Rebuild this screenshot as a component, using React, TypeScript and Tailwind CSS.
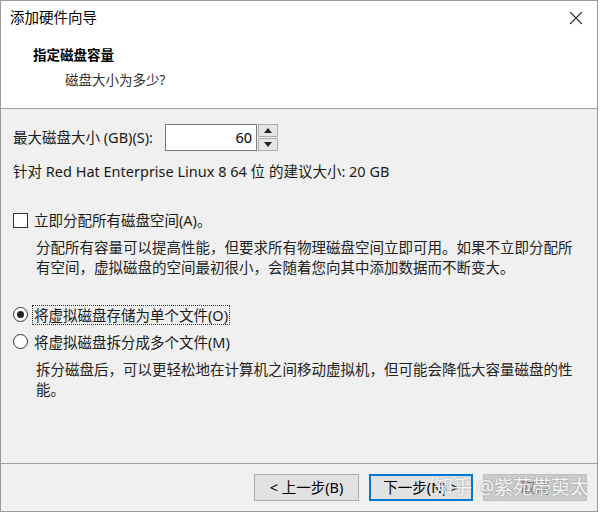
import React from "react";

const font = {
  fontFamily: '"Noto Sans", "Noto Sans CJK SC", sans-serif',
};

function Radio({ checked }: { checked?: boolean }) {
  return (
    <span className="flex h-[15px] w-[15px] items-center justify-center rounded-full border border-[#333] bg-white">
      {checked && <span className="h-[7px] w-[7px] rounded-full bg-[#222]" />}
    </span>
  );
}

export default function App() {
  return (
    <div className="h-[513px] w-[600px] bg-white text-[14.5px] text-[#1a1a1a]" style={font}>
      <div className="relative flex h-[512px] w-[598px] flex-col border border-[#9a9a9a]">
        {/* title bar + header */}
        <div className="flex h-[107px] flex-col bg-white">
          <div className="flex h-[34px] items-center justify-between pl-[9px] pr-[14px]">
            <span className="text-[14.5px] text-black">添加硬件向导</span>
            <svg width="14" height="14" viewBox="0 0 14 14" className="text-[#333]">
              <path d="M1 1L13 13M13 1L1 13" stroke="currentColor" strokeWidth="1.1" />
            </svg>
          </div>
          <div className="pl-[32px] pt-[10px]">
            <div className="text-[13.5px] font-bold text-black">指定磁盘容量</div>
            <div className="mt-[5px] pl-[32px] text-[13.5px] text-[#333]">磁盘大小为多少?</div>
          </div>
        </div>
        <div className="h-px bg-[#a0a0a0]" />

        {/* content */}
        <div className="flex flex-1 flex-col bg-[#f0f0f0] px-[12px] pt-[15px]">
          <div className="flex items-center">
            <span className="w-[152px]">最大磁盘大小 (GB)(S):</span>
            <div className="flex h-[27px] w-[92px] items-center justify-end border border-[#7a7a7a] bg-white pr-[4px] text-black">
              60
            </div>
            <div className="ml-[1px] flex h-[27px] w-[20px] flex-col gap-px">
              <div className="flex flex-1 items-center justify-center border border-[#adadad] bg-[#e5e5e5]">
                <svg width="8" height="5" viewBox="0 0 8 5">
                  <path d="M0 5L4 0L8 5Z" fill="#222" />
                </svg>
              </div>
              <div className="flex flex-1 items-center justify-center border border-[#adadad] bg-[#e5e5e5]">
                <svg width="8" height="5" viewBox="0 0 8 5">
                  <path d="M0 0L4 5L8 0Z" fill="#222" />
                </svg>
              </div>
            </div>
          </div>

          <div className="mt-[10px]">针对 Red Hat Enterprise Linux 8 64 位 的建议大小: 20 GB</div>

          <div className="mt-[27px] flex items-center gap-[6px]">
            <span className="h-[15px] w-[15px] border border-[#333] bg-white" />
            <span>立即分配所有磁盘空间(A)。</span>
          </div>
          <div className="mt-[5px] pl-[23px] leading-[20px] text-[#222]">
            分配所有容量可以提高性能，但要求所有物理磁盘空间立即可用。如果不立即分配所
            <br />
            有空间，虚拟磁盘的空间最初很小，会随着您向其中添加数据而不断变大。
          </div>

          <div className="mt-[28px] flex items-center gap-[4px]">
            <Radio checked />
            <span className="border border-dotted border-[#333] px-px leading-[18px]">
              将虚拟磁盘存储为单个文件(O)
            </span>
          </div>
          <div className="mt-[8px] flex items-center gap-[4px]">
            <Radio />
            <span className="px-[2px] leading-[18px]">将虚拟磁盘拆分成多个文件(M)</span>
          </div>
          <div className="mt-[8px] pl-[23px] leading-[20px] text-[#222]">
            拆分磁盘后，可以更轻松地在计算机之间移动虚拟机，但可能会降低大容量磁盘的性
            <br />
            能。
          </div>
        </div>

        {/* footer */}
        <div className="h-px bg-[#a0a0a0]" />
        <div className="flex h-[47px] items-center justify-end gap-[10px] bg-[#f0f0f0] pr-[10px]">
          <button className="flex h-[27px] w-[105px] items-center justify-center border border-[#adadad] bg-[#e1e1e1] text-black">
            &lt; 上一步(B)
          </button>
          <button className="flex h-[27px] w-[104px] items-center justify-center border-2 border-[#0078d7] bg-[#e1e1e1] text-black">
            下一步(N) &gt;
          </button>
          <button className="flex h-[27px] w-[104px] items-center justify-center border border-[#bfbfbf] bg-[#cccccc] text-[#838383]">
            取消
          </button>
        </div>

        {/* watermark */}
        <div
          className="pointer-events-none absolute bottom-[10px] right-[8px] text-[19px] text-white/90"
          style={{ textShadow: "0 0 2px rgba(0,0,0,0.35)" }}
        >
          知乎 @紫苑帯萸太
        </div>
      </div>
    </div>
  );
}
